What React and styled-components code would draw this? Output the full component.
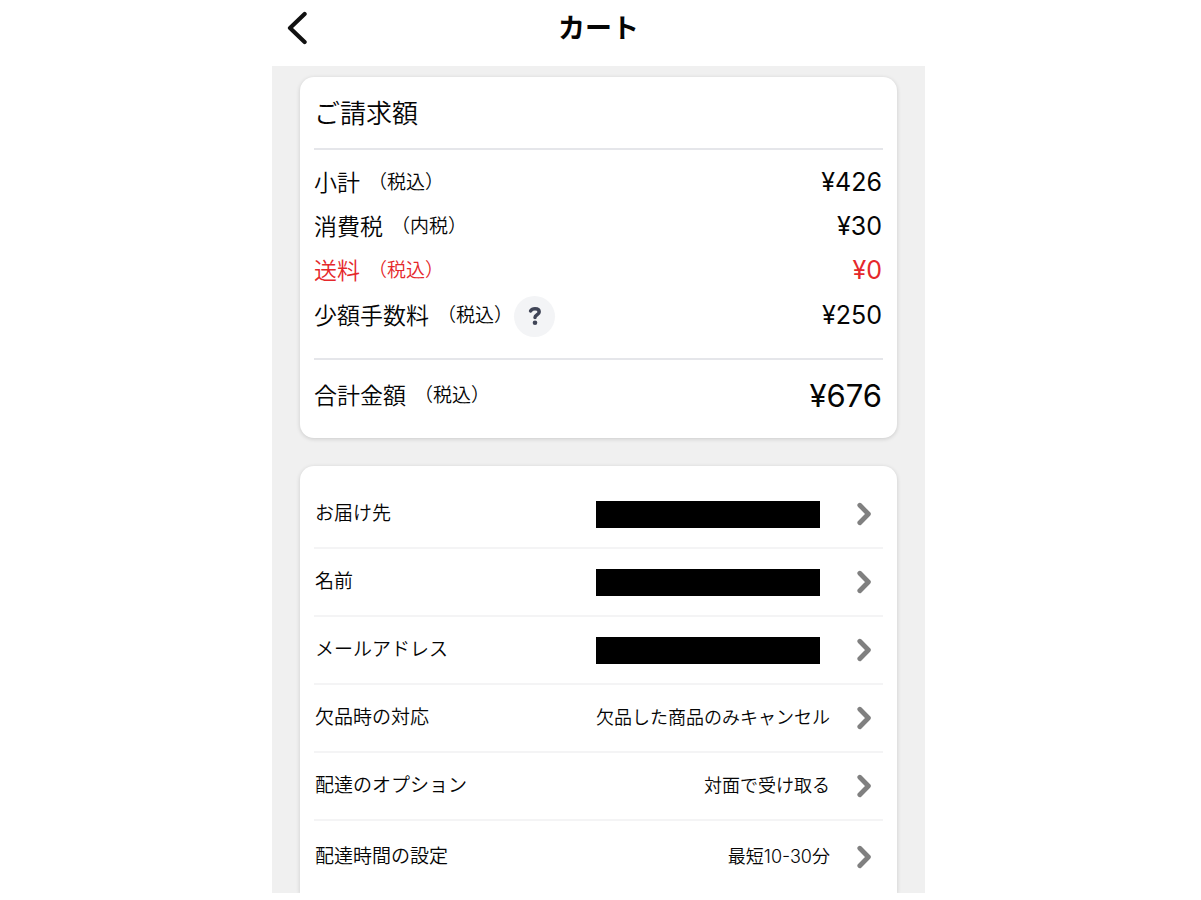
import React from "react";
import styled, { createGlobalStyle, css } from "styled-components";

const GlobalStyle = createGlobalStyle`
  * {
    box-sizing: border-box;
  }

  body {
    margin: 0;
    background: #fff;
    color: #050505;
    font-family: Inter, "Noto Sans CJK JP", sans-serif;
    line-height: 1.5;
  }
`;

const summary = [
  { label: "小計", note: "（税込）", price: "¥426" },
  { label: "消費税", note: "（内税）", price: "¥30" },
  { label: "送料", note: "（税込）", price: "¥0", red: true },
  { label: "少額手数料", note: "（税込）", price: "¥250", help: true },
];

const settings = [
  { label: "お届け先" },
  { label: "名前" },
  { label: "メールアドレス" },
  { label: "欠品時の対応", value: "欠品した商品のみキャンセル" },
  { label: "配達のオプション", value: "対面で受け取る" },
  { label: "配達時間の設定", value: "最短10-30分" },
];

const Page = styled.div`
  padding-right: 4px;
`;

const Screen = styled.div`
  max-width: 653px;
  margin: 0 auto;
`;

const Header = styled.header`
  display: grid;
  grid-template-columns: 50px 1fr 50px;
  align-items: center;
  height: 66px;
  padding-bottom: 10px;

  h1 {
    margin: 0;
    padding-top: 2px;
    text-align: center;
    font-size: 27px;
    font-weight: 700;
    line-height: 40px;
  }
`;

const IconButton = styled.button`
  display: flex;
  align-items: center;
  justify-content: center;
  padding: 0;
  border: 0;
  background: none;
  color: #111;
  cursor: pointer;
`;

const HelpButton = styled(IconButton)`
  width: 41px;
  height: 41px;
  margin-left: 1px;
  border-radius: 50%;
  background: #f3f4f6;
  color: #404557;
`;

const Main = styled.main`
  display: flex;
  flex-direction: column;
  gap: 28px;
  padding: 11px 28px 0;
  background: #f0f0f0;
`;

const Card = styled.section`
  padding: 0 14px;
  border-radius: 14px;
  background: #fff;
  box-shadow: 0 1px 4px rgba(0, 0, 0, 0.16);
`;

const ListCard = styled(Card)`
  padding-top: 15px;
  border-radius: 14px 14px 0 0;
`;

const CardTitle = styled.h2`
  height: 73px;
  margin: 0;
  border-bottom: 2px solid #e5e6ea;
  font-size: 26px;
  font-weight: 350;
  line-height: 73px;
`;

const Rows = styled.dl`
  margin: 0;
  padding: 11px 0 19px;
  border-bottom: 2px solid #e5e6ea;
`;

const Row = styled.div`
  display: flex;
  align-items: center;
  justify-content: space-between;
  height: 44px;
  padding-right: 1px;
  ${({ $red }) =>
    $red &&
    css`
      color: #e5282b;
    `}

  &:last-child {
    height: 46px;
  }

  dt {
    display: flex;
    align-items: center;
    font-size: 23px;
    font-weight: 350;
  }

  dd {
    margin: 0;
    font-size: 25px;
  }
`;

const Total = styled.dl`
  margin: 0;
  padding: 13px 0 19px;

  dd {
    font-size: 31px;
  }
`;

const Note = styled.span`
  margin-left: 8px;
  font-size: 19px;
  line-height: 30px;
`;

const SettingRow = styled.button`
  display: flex;
  align-items: center;
  width: 100%;
  height: 68px;
  padding: 0 12px 0 1px;
  border: 0;
  border-bottom: 2px solid #f4f4f5;
  background: none;
  color: inherit;
  font-family: inherit;
  font-weight: 350;
  line-height: 30px;
  cursor: pointer;

  &:last-child {
    height: 72px;
    border-bottom: 0;
  }
`;

const SettingLabel = styled.span`
  flex: 1;
  font-size: 19px;
  text-align: left;
`;

const SettingValue = styled.span`
  margin-right: 27px;
  font-size: 18px;
`;

const Masked = styled.span`
  width: 224px;
  height: 27px;
  margin-right: 37px;
  background: #000;
`;

const BackIcon = () => (
  <svg width="20" height="34" viewBox="0 0 20 34" fill="none" aria-hidden="true">
    <path d="M17.6 3 3 17l14.6 14" stroke="currentColor" strokeWidth="4.2" strokeLinecap="round" strokeLinejoin="round" />
  </svg>
);

const ChevronIcon = () => (
  <svg width="14" height="24" viewBox="0 0 14 24" fill="none" aria-hidden="true">
    <path d="m2.8 3.2 8.6 8.8-8.6 8.8" stroke="#808080" strokeWidth="4.8" strokeLinecap="round" strokeLinejoin="round" />
  </svg>
);

const HelpIcon = () => (
  <svg width="14" height="20" viewBox="0 0 14 20" fill="none" aria-hidden="true">
    <path d="M2.6 4.9C3.4 3.6 5 2.8 7 2.8c2.6 0 4.2 1.2 4.2 3.2 0 2.8-4.2 2.7-4.2 5.5" stroke="currentColor" strokeWidth="3.5" strokeLinecap="round" strokeLinejoin="round" />
    <circle cx="7" cy="16.8" r="2.3" fill="currentColor" />
  </svg>
);

const App = () => {
  return (
    <Page lang="ja">
      <GlobalStyle />
      <Screen>
        <Header>
          <IconButton aria-label="戻る">
            <BackIcon />
          </IconButton>
          <h1>カート</h1>
        </Header>
        <Main>
          <Card>
            <CardTitle>ご請求額</CardTitle>
            <Rows>
              {summary.map(({ label, note, price, red, help }) => (
                <Row key={label} $red={red}>
                  <dt>
                    {label}
                    <Note>{note}</Note>
                    {help && (
                      <HelpButton aria-label="少額手数料について">
                        <HelpIcon />
                      </HelpButton>
                    )}
                  </dt>
                  <dd>{price}</dd>
                </Row>
              ))}
            </Rows>
            <Total>
              <Row>
                <dt>
                  合計金額
                  <Note>（税込）</Note>
                </dt>
                <dd>¥676</dd>
              </Row>
            </Total>
          </Card>
          <ListCard>
            {settings.map(({ label, value }) => (
              <SettingRow key={label}>
                <SettingLabel>{label}</SettingLabel>
                {value ? <SettingValue>{value}</SettingValue> : <Masked />}
                <ChevronIcon />
              </SettingRow>
            ))}
          </ListCard>
        </Main>
      </Screen>
    </Page>
  );
};

export default App;
